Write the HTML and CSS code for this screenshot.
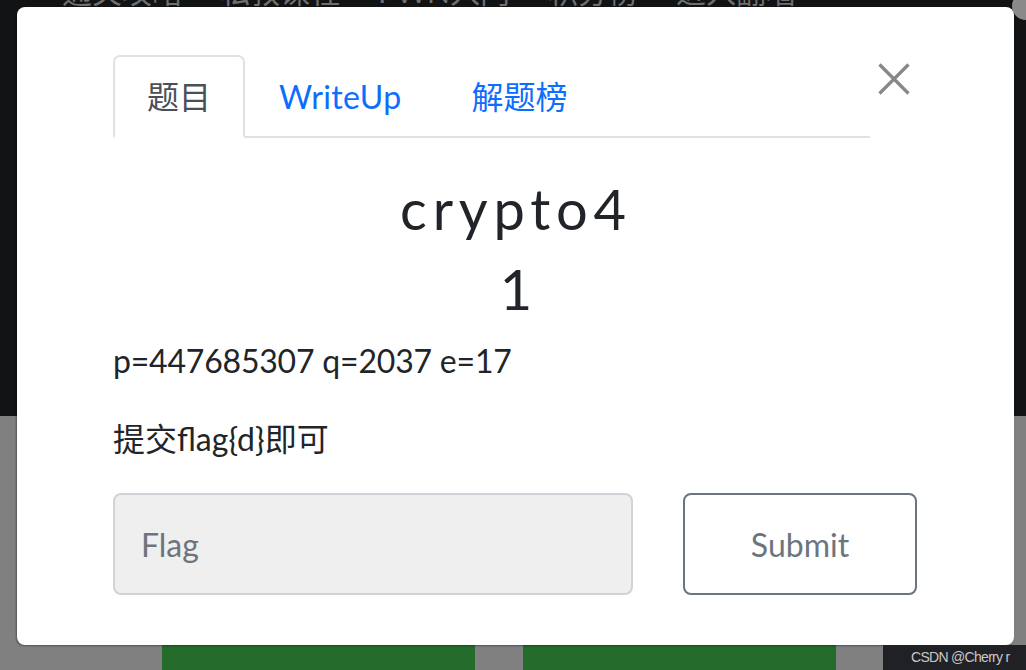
FILE: index.html
```html
<!DOCTYPE html>
<html lang="zh-CN">
<head>
<meta charset="utf-8">
<title>crypto4</title>
<link rel="stylesheet" href="styles.css">
</head>
<body>
<div class="page">
  <header class="hero">
    <nav class="topnav">
      <span>P</span>
      <span>通关攻略</span>
      <span>私教课程</span>
      <span>PWN入门</span>
      <span>积分榜</span>
      <span>进入翻墙</span>
    </nav>
    <span class="avatar"></span>
  </header>
  <section class="lower">
    <div class="cards">
      <div class="card"></div>
      <div class="card"></div>
    </div>
  </section>
</div>

<div class="modal">
  <div class="modal-head">
    <ul class="tabs">
      <li class="tab active">题目</li>
      <li class="tab">WriteUp</li>
      <li class="tab">解题榜</li>
    </ul>
    <button class="close" aria-label="Close">
      <svg width="32" height="32" viewBox="0 0 32 32"><path d="M1.5 1.5 L30.5 30.5 M30.5 1.5 L1.5 30.5" stroke="#878787" stroke-width="3.2" fill="none"/></svg>
    </button>
  </div>
  <div class="challenge">
    <h3 class="title">crypto4</h3>
    <h3 class="value">1</h3>
  </div>
  <p class="desc">p=447685307 q=2037 e=17</p>
  <p class="desc">提交flag{d}即可</p>
  <form class="submit-row">
    <input class="flag-input" type="text" placeholder="Flag">
    <button class="submit-btn" type="button">Submit</button>
  </form>
</div>

<div class="watermark">CSDN @Cherry r</div>
</body>
</html>
```

FILE: styles.css
```css
* { box-sizing: border-box; }

html, body {
  margin: 0;
  width: 1026px;
  height: 670px;
  overflow: hidden;
}

body {
  font-family: Lato, "Noto Sans CJK SC", sans-serif;
  color: #212529;
  position: relative;
}

.page {
  display: flex;
  flex-direction: column;
  height: 670px;
}

.hero {
  flex: 0 0 416px;
  background: #121314;
  position: relative;
  overflow: hidden;
}

/* navigation bar scrolled mostly out of view behind the dialog */
.topnav {
  display: flex;
  gap: 38px;
  transform: translateY(-25px);
  font-size: 30px;
  line-height: 32px;
  color: #6f6f6f;
  white-space: nowrap;
}

.topnav span:first-child { margin-left: -10px; margin-right: 16px; }

.avatar {
  position: absolute;
  right: -14px;
  top: -8px;
  width: 28px;
  height: 28px;
  border-radius: 50%;
  background: #8a8a8a;
}

.lower {
  flex: 1;
  background: #808080;
  padding-top: 229px;
}

.cards {
  display: flex;
  gap: 48px;
  padding-left: 162px;
}

.card {
  width: 313px;
  height: 30px;
  background: #256b2b;
}

.modal {
  position: absolute;
  left: 17px;
  top: 7px;
  width: 997px;
  height: 638px;
  background: #fff;
  border-radius: 8px;
  padding: 48px 97px 0 96px;
  box-shadow: -1px 1px 2px rgba(0, 0, 0, 0.35);
}

.modal-head {
  display: flex;
  align-items: flex-start;
}

.tabs {
  list-style: none;
  margin: 0;
  padding: 0;
  display: flex;
  width: 757px;
  border-bottom: 2px solid #dee2e6;
}

.tab {
  font-size: 32px;
  line-height: 48px;
  padding: 16px 33px 15px;
  border: 2px solid transparent;
  border-top-left-radius: 7px;
  border-top-right-radius: 7px;
  margin-bottom: -2px;
  color: #0d6efd;
}

.tab.active {
  color: #495057;
  border-color: #dee2e6 #dee2e6 #fff;
  background: #fff;
  padding-left: 32px;
  padding-right: 32px;
}

.tab:nth-child(2) { padding-left: 32px; letter-spacing: 0.4px; }

.close {
  margin-top: 8px;
  width: 47px;
  height: 32px;
  padding: 0;
  border: 0;
  background: none;
  display: flex;
  justify-content: center;
}

.challenge {
  margin-top: 37px;
  text-align: center;
}

.challenge h3 {
  margin: 0;
  font-weight: 400;
  font-size: 56px;
  line-height: 1.2;
}

.challenge .title {
  letter-spacing: 5.8px;
  text-indent: 2px;
}

.challenge .value { margin-top: 13px; padding-left: 2px; }

.desc {
  margin: 0;
  font-size: 32px;
  line-height: 48px;
}

.challenge + .desc { margin-top: 15px; letter-spacing: -0.2px; }
.desc + .desc { margin-top: 30px; }

.submit-row {
  display: flex;
  gap: 50px;
  margin: 30px 0 0;
}

.flag-input {
  width: 520px;
  height: 102px;
  border: 2px solid #ced4da;
  border-radius: 8px;
  background: #efefef;
  padding: 0 26px;
  font-family: Lato, sans-serif;
  font-size: 32px;
  color: #212529;
}

.flag-input::placeholder { color: #6c757d; }

.submit-btn {
  width: 234px;
  height: 102px;
  border: 2px solid #6c757d;
  border-radius: 8px;
  background: #fff;
  font-family: Lato, sans-serif;
  font-size: 32px;
  color: #6c757d;
}

.watermark {
  position: absolute;
  right: 0;
  bottom: 0;
  width: 143px;
  height: 25px;
  background: #202124;
  color: #c8c8c8;
  font-family: "Liberation Sans", Arial, sans-serif;
  font-size: 14px;
  line-height: 25px;
  padding-left: 28px;
  letter-spacing: -0.7px;
}
```
